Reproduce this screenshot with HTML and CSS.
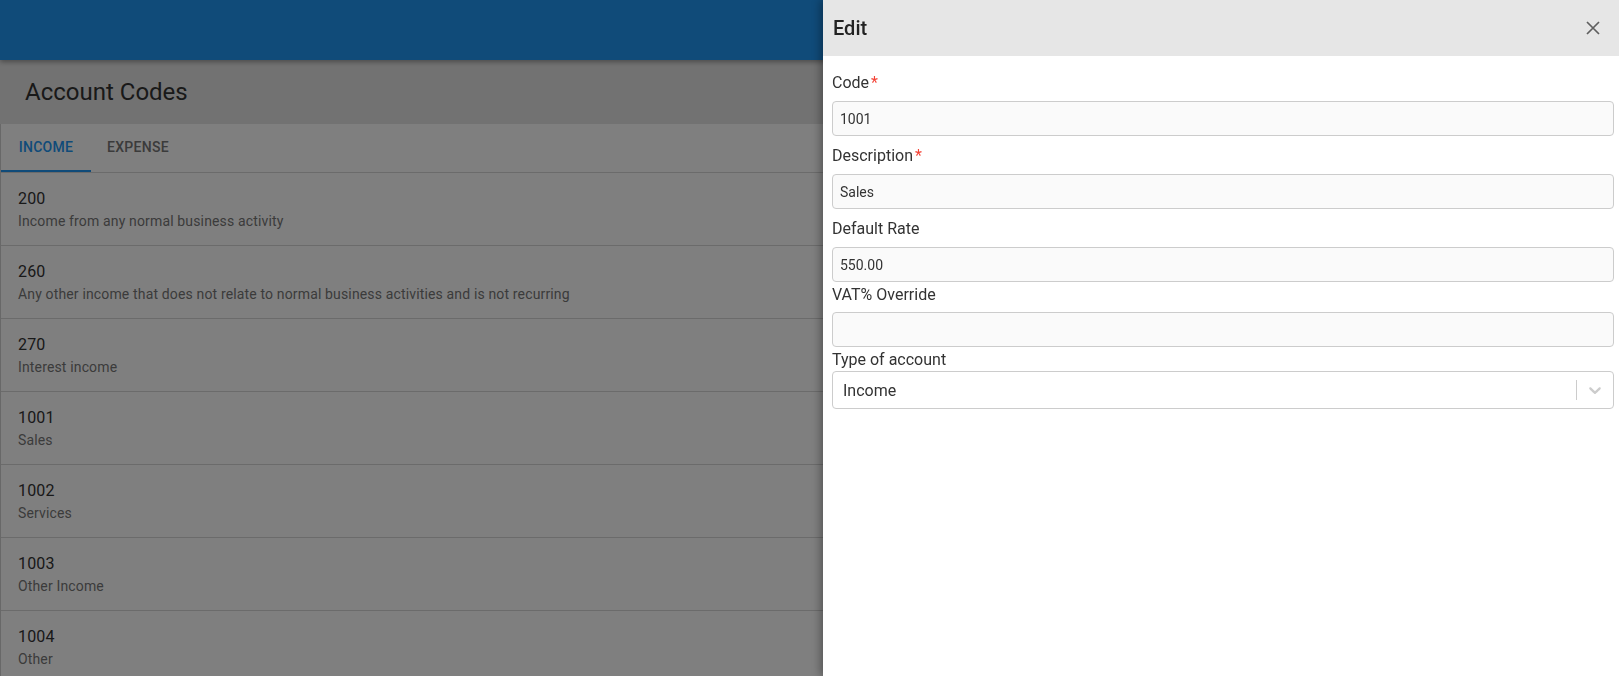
FILE: index.html
```html
<!DOCTYPE html>
<html lang="en">
<head>
    <meta charset="UTF-8">
    <meta name="viewport" content="width=device-width, initial-scale=1.0">
    <title>Account Codes</title>
    <link rel="stylesheet" href="styles.css">
</head>
<body>

<header class="topbar"></header>

<div class="page-title">
    <h1>Account Codes</h1>
</div>

<div class="card">
    <div class="tabs">
        <div class="tab active">Income</div>
        <div class="tab">Expense</div>
    </div>
    <ul class="code-list">
        <li><div class="code">200</div><div class="desc">Income from any normal business activity</div></li>
        <li><div class="code">260</div><div class="desc">Any other income that does not relate to normal business activities and is not recurring</div></li>
        <li><div class="code">270</div><div class="desc">Interest income</div></li>
        <li><div class="code">1001</div><div class="desc">Sales</div></li>
        <li><div class="code">1002</div><div class="desc">Services</div></li>
        <li><div class="code">1003</div><div class="desc">Other Income</div></li>
        <li><div class="code">1004</div><div class="desc">Other</div></li>
    </ul>
</div>

<div class="backdrop"></div>

<aside class="drawer">
    <div class="drawer-head">
        <h2>Edit</h2>
        <button class="close" aria-label="Close">
            <svg width="14" height="14" viewBox="0 0 14 14"><path d="M1 1L13 13M13 1L1 13" stroke="#5f5f5f" stroke-width="1.7" fill="none"/></svg>
        </button>
    </div>
    <form class="drawer-body">
        <div class="field required">
            <label>Code<span class="req">*</span></label>
            <input type="text" value="1001">
        </div>
        <div class="field required">
            <label>Description<span class="req">*</span></label>
            <input type="text" value="Sales">
        </div>
        <div class="field">
            <label>Default Rate</label>
            <input type="text" value="550.00">
        </div>
        <div class="field vat">
            <label>VAT% Override</label>
            <input type="text" value="">
        </div>
        <div class="field">
            <label>Type of account</label>
            <div class="select">
                <div class="select-value">Income</div>
                <span class="select-sep"></span>
                <span class="select-arrow">
                    <svg width="20" height="20" viewBox="0 0 20 20"><path d="M4.516 7.548c0.436-0.446 1.043-0.481 1.576 0l3.908 3.747 3.908-3.747c0.533-0.481 1.141-0.446 1.574 0 0.436 0.445 0.408 1.197 0 1.615-0.406 0.418-4.695 4.502-4.695 4.502-0.217 0.223-0.502 0.335-0.787 0.335s-0.57-0.112-0.789-0.335c0 0-4.287-4.084-4.695-4.502s-0.436-1.170 0-1.615z" fill="#ccc"/></svg>
                </span>
            </div>
        </div>
    </form>
</aside>

</body>
</html>
```

FILE: styles.css
```css
body {
    margin: 0;
    font-family: Roboto, "Liberation Sans", Arial, sans-serif;
    background: #ffffff;
    color: #333;
    overflow: hidden;
}
.topbar {
    height: 60px;
    background: #2196f3;
    box-shadow: 0 2px 5px rgba(0, 0, 0, 0.35);
    position: relative;
    z-index: 1;
}
.page-title {
    height: 64px;
    background: #e5e5e5;
    display: flex;
    align-items: center;
    padding-left: 25px;
}
.page-title h1 {
    margin: 0;
    font-size: 24px;
    font-weight: 400;
    color: #333;
}
.card {
    border-left: 1px solid #d0d0d0;
}
.tabs {
    display: flex;
    height: 49px;
    border-bottom: 1px solid #d6d6d6;
    box-sizing: border-box;
}
.tab {
    min-width: 90px;
    padding: 0 16px;
    box-sizing: border-box;
    display: flex;
    align-items: center;
    justify-content: center;
    font-size: 14px;
    font-weight: 500;
    letter-spacing: 0.3px;
    text-transform: uppercase;
    color: #767676;
    border-bottom: 2px solid transparent;
}
.tab.active {
    color: #2196f3;
    border-bottom-color: #2196f3;
}
.code-list {
    list-style: none;
    margin: 0;
    padding: 0;
}
.code-list li {
    padding: 14px 16px 14px 17px;
    border-bottom: 1px solid #d6d6d6;
}
.code {
    font-size: 16px;
    line-height: 24px;
    letter-spacing: 0.15px;
    color: #333;
}
.desc {
    font-size: 14px;
    line-height: 20px;
    letter-spacing: 0.15px;
    color: #777;
}

/* overlay + drawer */
.backdrop {
    position: fixed;
    top: 0;
    left: 0;
    right: 0;
    bottom: 0;
    background: rgba(0, 0, 0, 0.5);
    z-index: 5;
}
.drawer {
    position: fixed;
    top: 0;
    right: 0;
    bottom: 0;
    width: 796px;
    background: #ffffff;
    box-shadow: -3px 0 8px rgba(0, 0, 0, 0.3);
    z-index: 6;
}
.drawer-head {
    height: 56px;
    background: #e6e6e6;
    display: flex;
    align-items: center;
    justify-content: space-between;
    padding: 0 18px 0 10px;
}
.drawer-head h2 {
    margin: 0;
    font-size: 20px;
    font-weight: 500;
    color: #222;
}
.close {
    background: none;
    border: none;
    padding: 0;
    width: 16px;
    height: 16px;
    display: flex;
    align-items: center;
    justify-content: center;
    cursor: pointer;
}
.drawer-body {
    padding: 17px 5px 0 9px;
}
.field {
    margin-bottom: 3px;
}
.field.required {
    margin-bottom: 10px;
}
.field label {
    display: block;
    font-size: 16px;
    line-height: 20px;
    color: #333;
}
.req {
    color: #f44336;
    margin-left: 2px;
}
.field input {
    display: block;
    width: 100%;
    box-sizing: border-box;
    height: 35px;
    margin-top: 8px;
    padding: 0 7px;
    border: 1px solid #ccc;
    border-radius: 4px;
    background: #fafafa;
    font-family: inherit;
    font-size: 14px;
    color: #333;
}
.field.vat input {
    margin-top: 7px;
}
.select {
    display: flex;
    align-items: center;
    height: 38px;
    margin-top: 1px;
    box-sizing: border-box;
    border: 1px solid #ccc;
    border-radius: 4px;
    background: #fff;
}
.select-value {
    flex: 1;
    padding: 0 10px;
    font-size: 16px;
    color: #333;
}
.select-sep {
    width: 1px;
    align-self: stretch;
    margin: 8px 0;
    background: #ccc;
}
.select-arrow {
    padding: 0 8px;
    display: flex;
    align-items: center;
}
```
